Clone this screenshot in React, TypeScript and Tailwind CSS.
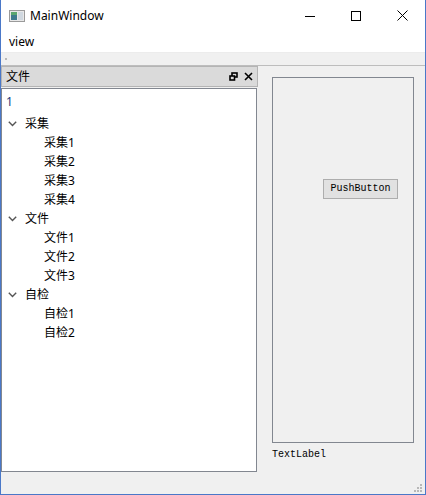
import React from "react";

const cjk = { fontFamily: '"Noto Sans", "Noto Sans CJK SC", sans-serif' };
const mono = { fontFamily: '"Liberation Mono", "Noto Sans CJK SC", monospace' };

function Chevron() {
  return (
    <svg width="9" height="6" viewBox="0 0 9 6" className="shrink-0">
      <path d="M0.8 0.8 L4.5 4.5 L8.2 0.8" fill="none" stroke="#555" strokeWidth="1.4" />
    </svg>
  );
}

function Parent({ label }: { label: string }) {
  return (
    <div className="h-[19px] flex items-center pl-[6px] text-[12px] text-black leading-none">
      <Chevron />
      <span className="ml-[8px]">{label}</span>
    </div>
  );
}

function Child({ label }: { label: string }) {
  return (
    <div className="h-[19px] flex items-center pl-[42px] text-[12px] text-black leading-none">
      <span>{label}</span>
    </div>
  );
}

export default function App() {
  return (
    <div
      className="w-[426px] h-[495px] flex flex-col bg-[#f0f0f0] border-x border-b border-[#4a78c8] overflow-hidden"
      style={cjk}
    >
      {/* Title bar */}
      <div className="h-[31px] bg-white flex items-center shrink-0">
        <svg width="16" height="12" viewBox="0 0 16 12" className="ml-[8px]">
          <rect x="0.5" y="0.5" width="15" height="11" fill="#e8e8e8" stroke="#9a9a9a" />
          <rect x="2" y="2" width="6" height="8" fill="#3d7a8c" />
          <rect x="2" y="2" width="6" height="3" fill="#5aa66e" />
          <rect x="9" y="2" width="5" height="8" fill="#d0d8e0" />
        </svg>
        <span className="ml-[5px] text-[12px] text-black leading-none">MainWindow</span>
        <div className="ml-auto flex h-full">
          <div className="w-[46px] h-full flex items-center justify-center">
            <svg width="10" height="10" viewBox="0 0 10 10">
              <path d="M0 5.5 H10" stroke="#000" strokeWidth="1" />
            </svg>
          </div>
          <div className="w-[46px] h-full flex items-center justify-center">
            <svg width="10" height="10" viewBox="0 0 10 10">
              <rect x="0.5" y="0.5" width="9" height="9" fill="none" stroke="#000" strokeWidth="1" />
            </svg>
          </div>
          <div className="w-[46px] h-full flex items-center justify-center">
            <svg width="11" height="11" viewBox="0 0 11 11">
              <path d="M0.5 0.5 L10.5 10.5 M10.5 0.5 L0.5 10.5" stroke="#000" strokeWidth="1" />
            </svg>
          </div>
        </div>
      </div>

      {/* Menu bar */}
      <div className="h-[22px] bg-white border-b border-[#ececec] flex items-center shrink-0">
        <span className="ml-[8px] text-[12px] text-black leading-none">view</span>
      </div>

      {/* Toolbar area */}
      <div className="h-[13px] bg-[#f0f0f0] border-b border-[#bdbdbd] shrink-0 flex items-center">
        <div className="ml-[4px] w-[2px] h-[2px] bg-[#b8b8b8]" />
      </div>

      {/* Main area */}
      <div className="flex shrink-0">
        {/* Dock */}
        <div className="w-[257px] flex flex-col">
          <div className="h-[21px] border border-[#b4b4b4] bg-[#dadada] flex items-center">
            <span className="ml-[4px] text-[12px] text-black leading-none">文件</span>
            <div className="ml-auto flex items-center">
              <svg width="9" height="9" viewBox="0 0 9 9">
                <rect x="3" y="1" width="5" height="4" fill="none" stroke="#000" strokeWidth="1.6" />
                <rect x="1" y="4" width="4.5" height="4" fill="#dadada" stroke="#000" strokeWidth="1.6" />
              </svg>
              <svg width="9" height="9" viewBox="0 0 9 9" className="ml-[6px] mr-[4px]">
                <path d="M1 1 L8 8 M8 1 L1 8" stroke="#000" strokeWidth="1.6" />
              </svg>
            </div>
          </div>
          <div className="mt-[1px] w-[256px] h-[384px] border border-[#828790] bg-white pt-[3px]">
            <div className="h-[19px] flex items-center pl-[4px] text-[12px] text-[#1b3c7c] leading-none">1</div>
            <div className="h-[3px]" />
            <Parent label="采集" />
            <Child label="采集1" />
            <Child label="采集2" />
            <Child label="采集3" />
            <Child label="采集4" />
            <Parent label="文件" />
            <Child label="文件1" />
            <Child label="文件2" />
            <Child label="文件3" />
            <Parent label="自检" />
            <Child label="自检1" />
            <Child label="自检2" />
          </div>
        </div>

        {/* Central widget */}
        <div className="flex-1 pl-[14px] pt-[11px]">
          <div className="w-[142px] h-[366px] border border-[#828790] pt-[101px] pl-[50px]">
            <div
              className="w-[75px] h-[20px] border border-[#adadad] bg-[#e1e1e1] flex items-center justify-center text-[10px] text-black leading-none"
              style={mono}
            >
              PushButton
            </div>
          </div>
          <div className="mt-[6px] text-[10px] text-black leading-[12px]" style={mono}>
            TextLabel
          </div>
        </div>
      </div>

      {/* Status area with size grip */}
      <div className="flex-1 flex items-end justify-end pr-[2px] pb-[1px]">
        <svg width="9" height="9" viewBox="0 0 9 9">
          <rect x="6" y="0" width="2" height="2" fill="#b8b8b8" />
          <rect x="3" y="3" width="2" height="2" fill="#b8b8b8" />
          <rect x="6" y="3" width="2" height="2" fill="#b8b8b8" />
          <rect x="0" y="6" width="2" height="2" fill="#b8b8b8" />
          <rect x="3" y="6" width="2" height="2" fill="#b8b8b8" />
          <rect x="6" y="6" width="2" height="2" fill="#b8b8b8" />
        </svg>
      </div>
    </div>
  );
}
